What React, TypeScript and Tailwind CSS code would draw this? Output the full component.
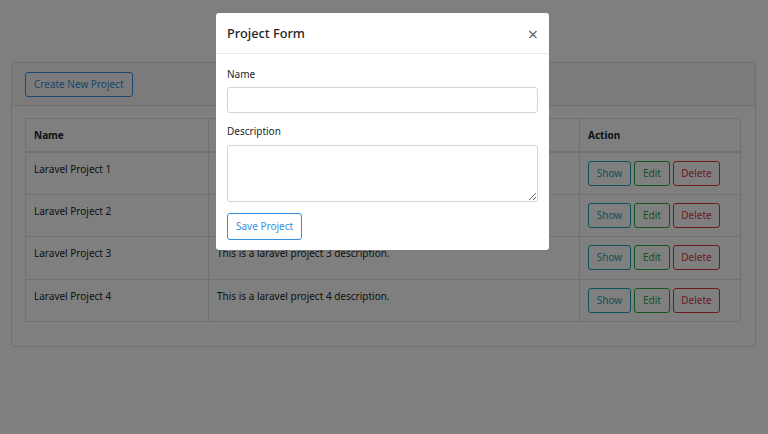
import React from "react";

const projects = [
  { name: "Laravel Project 1", description: "This is a laravel project 1 description." },
  { name: "Laravel Project 2", description: "This is a laravel project 2 description." },
  { name: "Laravel Project 3", description: "This is a laravel project 3 description." },
  { name: "Laravel Project 4", description: "This is a laravel project 4 description." },
];

export default function App() {
  return (
    <div className="relative w-[768px] h-[434px] overflow-hidden bg-white text-[10px] leading-[17.6px] text-[#212529] font-['Noto_Sans',sans-serif]">
      {/* Page underneath */}
      <div className="pt-[62px] pl-[11px] pr-[12px]">
        <div className="border border-[#dfdfdf] rounded-[3px] bg-white">
          <div className="h-[43px] flex items-center px-[13px] bg-[#f7f7f7] border-b border-[#dfdfdf]">
            <button className="h-[25px] px-[8px] pt-[1px] border border-[#3490dc] text-[#3490dc] rounded-[3px]">
              Create New Project
            </button>
          </div>
          <div className="pl-[13px] pr-[14px] pt-[12px] pb-[24px]">
            <table className="w-full border-collapse border border-[#dee2e6]">
              <thead>
                <tr className="h-[33px]">
                  <th className="w-[183px] text-left font-bold px-[8px] pt-[3px] border border-[#dee2e6] border-b-2">Name</th>
                  <th className="w-[371px] text-left font-bold px-[8px] pt-[3px] border border-[#dee2e6] border-b-2">Description</th>
                  <th className="text-left font-bold px-[8px] pt-[3px] border border-[#dee2e6] border-b-2">Action</th>
                </tr>
              </thead>
              <tbody>
                {projects.map((p) => (
                  <tr key={p.name} className="h-[42.5px]">
                    <td className="align-top px-[8px] pt-[8px] border border-[#dee2e6]">{p.name}</td>
                    <td className="align-top px-[8px] pt-[8px] border border-[#dee2e6]">{p.description}</td>
                    <td className="align-top px-[8px] pt-[8px] border border-[#dee2e6]">
                      <div className="flex gap-[3px]">
                        <button className="h-[25px] w-[43px] pt-[1px] border border-[#17a2b8] text-[#17a2b8] rounded-[3px]">Show</button>
                        <button className="h-[25px] w-[36px] pt-[1px] border border-[#28a745] text-[#28a745] rounded-[3px]">Edit</button>
                        <button className="h-[25px] w-[47px] pt-[1px] border border-[#dc3545] text-[#dc3545] rounded-[3px]">Delete</button>
                      </div>
                    </td>
                  </tr>
                ))}
              </tbody>
            </table>
          </div>
        </div>
      </div>

      {/* Backdrop */}
      <div className="absolute inset-0 bg-black/50" />

      {/* Modal */}
      <div className="absolute left-[216px] top-[13px] w-[333px] bg-white rounded-[3px]">
        <div className="h-[41px] flex items-center justify-between px-[11px] pt-[2px] border-b border-[#e9ecef]">
          <h5 className="text-[12.75px] font-medium">Project Form</h5>
          <span className="text-[18px] leading-none text-[#666]">×</span>
        </div>
        <div className="px-[11px] pt-[12px] pb-[10px]">
          <label className="block mb-[3px]">Name</label>
          <input className="block w-full h-[26px] border border-[#ced4da] rounded-[3px] px-[8px] outline-none" />
          <label className="block mt-[10px] mb-[5px]">Description</label>
          <textarea className="block w-full h-[57px] border border-[#ced4da] rounded-[3px] px-[8px] outline-none" />
          <button className="mt-[11px] h-[27px] px-[8px] pt-[1px] border border-[#3490dc] text-[#3490dc] rounded-[3px]">
            Save Project
          </button>
        </div>
      </div>
    </div>
  );
}
